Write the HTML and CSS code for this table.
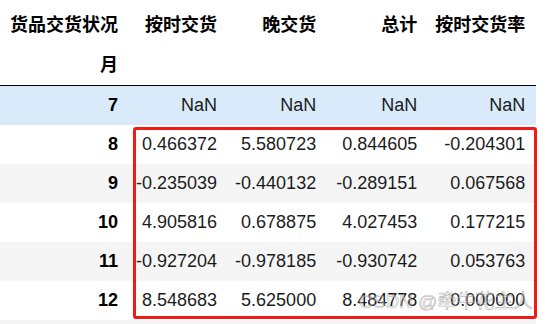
FILE: index.html
```html
<!DOCTYPE html>
<html lang="zh">
<head>
<meta charset="utf-8">
<link rel="stylesheet" href="styles.css">
</head>
<body>
<div class="page">
  <table class="df">
    <thead>
      <tr class="hdr-names">
        <th class="idx">货品交货状况</th>
        <th>按时交货</th>
        <th>晚交货</th>
        <th class="c3">总计</th>
        <th class="c4">按时交货率</th>
      </tr>
      <tr class="hdr-index">
        <th class="idx">月</th>
        <th></th>
        <th></th>
        <th class="c3"></th>
        <th class="c4"></th>
      </tr>
    </thead>
    <tbody>
      <tr class="hover"><th class="idx">7</th><td>NaN</td><td>NaN</td><td class="c3">NaN</td><td class="c4">NaN</td></tr>
      <tr><th class="idx">8</th><td>0.466372</td><td>5.580723</td><td class="c3">0.844605</td><td class="c4">-0.204301</td></tr>
      <tr><th class="idx">9</th><td>-0.235039</td><td>-0.440132</td><td class="c3">-0.289151</td><td class="c4">0.067568</td></tr>
      <tr><th class="idx">10</th><td>4.905816</td><td>0.678875</td><td class="c3">4.027453</td><td class="c4">0.177215</td></tr>
      <tr><th class="idx">11</th><td>-0.927204</td><td>-0.978185</td><td class="c3">-0.930742</td><td class="c4">0.053763</td></tr>
      <tr><th class="idx">12</th><td>8.548683</td><td>5.625000</td><td class="c3">8.484778</td><td class="c4">0.000000</td></tr>
      <tr class="cut"><th class="idx">&nbsp;</th><td>&nbsp;</td><td>&nbsp;</td><td class="c3">&nbsp;</td><td class="c4">&nbsp;</td></tr>
    </tbody>
  </table>
  <div class="highlight"></div>
  <div class="watermark">CSDN @牵牛花主人</div>
</div>
</body>
</html>
```

FILE: styles.css
```css
html, body {
  margin: 0;
  padding: 0;
  background: #fff;
}

.page {
  position: relative;
  width: 548px;
  height: 324px;
  overflow: hidden;
}

.df {
  margin-top: 5px;
  border-collapse: collapse;
  border-spacing: 0;
  font-family: "Liberation Sans", "Noto Sans CJK SC", Arial, sans-serif;
  font-size: 18px;
  line-height: 21px;
  color: #000;
}

.df th,
.df td {
  padding: 9px 9px;
  text-align: right;
  vertical-align: middle;
  white-space: nowrap;
  border: none;
}

.df th {
  font-weight: bold;
}

.df td {
  color: #1c1c1c;
}

.df .idx {
  padding-left: 10px;
}

.df .c3 {
  padding-left: 11px;
}

.df .c4 {
  padding-right: 11px;
}

.df thead {
  border-bottom: 1px solid #000;
}

.df .hdr-names th {
  padding-top: 10px;
  padding-bottom: 10px;
}

.df tbody tr:nth-child(odd) {
  background: #f5f5f5;
}

.df tbody tr.hover {
  background: #d9ebfa;
}

.highlight {
  position: absolute;
  left: 133px;
  top: 127px;
  width: 404px;
  height: 192px;
  box-sizing: border-box;
  border: 3px solid #f21b14;
  border-radius: 3px;
}

.watermark {
  position: absolute;
  left: 359px;
  top: 290px;
  font-family: "Liberation Sans", "Noto Sans CJK SC", sans-serif;
  font-size: 19px;
  line-height: 24px;
  color: rgba(255, 255, 255, 0.35);
  -webkit-text-stroke: 0.7px rgba(130, 130, 130, 0.55);
  white-space: nowrap;
}
```
